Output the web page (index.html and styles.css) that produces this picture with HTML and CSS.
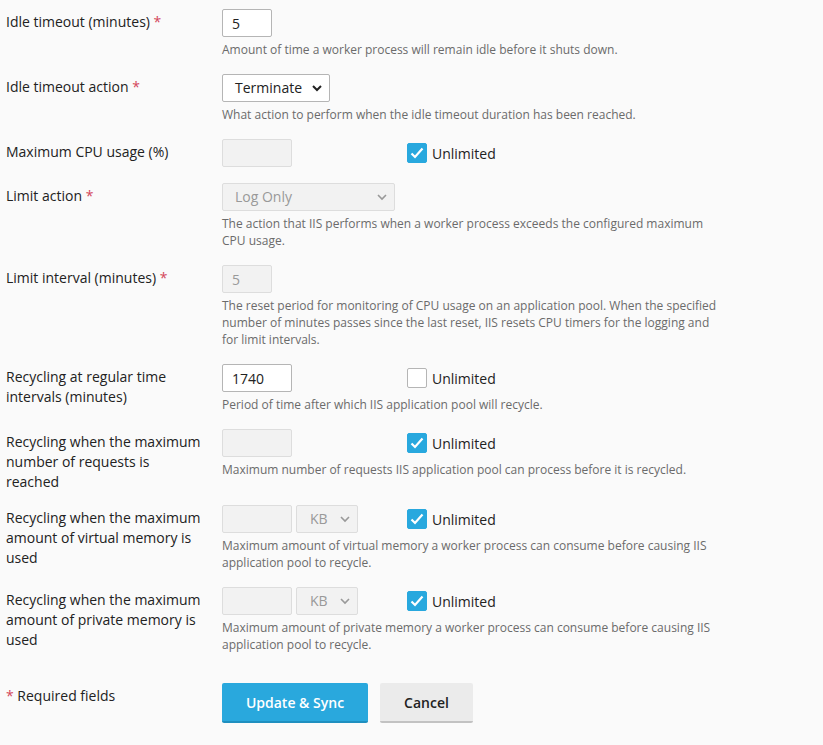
FILE: index.html
```html
<!DOCTYPE html>
<html>
<head>
    <link rel="stylesheet" href="styles.css">
</head>
<body>
    <form class="settings">
        <div class="row">
            <div class="label">Idle timeout (minutes) <span class="req">*</span></div>
            <div class="field">
                <div class="controls"><input class="text short" type="text" value="5"></div>
                <div class="hint">Amount of time a worker process will remain idle before it shuts down.</div>
            </div>
        </div>
        <div class="row">
            <div class="label">Idle timeout action <span class="req">*</span></div>
            <div class="field">
                <div class="controls">
                    <span class="select action">Terminate
                        <svg class="chev" width="10" height="8" viewBox="0 0 10 8"><path d="M1 2l4 4 4-4" fill="none" stroke="#222" stroke-width="2"/></svg>
                    </span>
                </div>
                <div class="hint">What action to perform when the idle timeout duration has been reached.</div>
            </div>
        </div>
        <div class="row">
            <div class="label">Maximum CPU usage (%)</div>
            <div class="field">
                <div class="controls">
                    <div class="group"><input class="text mid" type="text" disabled></div>
                    <label class="check"><span class="box on"><svg width="14" height="12" viewBox="0 0 14 12"><path d="M1.5 6.5l3.5 3.5 7.5-8.5" fill="none" stroke="#fff" stroke-width="2.2"/></svg></span>Unlimited</label>
                </div>
            </div>
        </div>
        <div class="row">
            <div class="label">Limit action <span class="req">*</span></div>
            <div class="field">
                <div class="controls">
                    <span class="select wide off">Log Only
                        <svg class="chev" width="10" height="8" viewBox="0 0 10 8"><path d="M1 2l4 4 4-4" fill="none" stroke="#999" stroke-width="1.6"/></svg>
                    </span>
                </div>
                <div class="hint">The action that IIS performs when a worker process exceeds the configured maximum CPU usage.</div>
            </div>
        </div>
        <div class="row">
            <div class="label">Limit interval (minutes) <span class="req">*</span></div>
            <div class="field">
                <div class="controls"><input class="text short" type="text" value="5" disabled></div>
                <div class="hint">The reset period for monitoring of CPU usage on an application pool. When the specified number of minutes passes since the last reset, IIS resets CPU timers for the logging and for limit intervals.</div>
            </div>
        </div>
        <div class="row">
            <div class="label">Recycling at regular time intervals (minutes)</div>
            <div class="field">
                <div class="controls">
                    <div class="group"><input class="text mid" type="text" value="1740"></div>
                    <label class="check"><span class="box"></span>Unlimited</label>
                </div>
                <div class="hint">Period of time after which IIS application pool will recycle.</div>
            </div>
        </div>
        <div class="row">
            <div class="label">Recycling when the maximum number of requests is reached</div>
            <div class="field">
                <div class="controls">
                    <div class="group"><input class="text mid" type="text" disabled></div>
                    <label class="check"><span class="box on"><svg width="14" height="12" viewBox="0 0 14 12"><path d="M1.5 6.5l3.5 3.5 7.5-8.5" fill="none" stroke="#fff" stroke-width="2.2"/></svg></span>Unlimited</label>
                </div>
                <div class="hint">Maximum number of requests IIS application pool can process before it is recycled.</div>
            </div>
        </div>
        <div class="row">
            <div class="label">Recycling when the maximum amount of virtual memory is used</div>
            <div class="field">
                <div class="controls">
                    <div class="group">
                        <input class="text mid" type="text" disabled>
                        <span class="select unit off">KB
                            <svg class="chev" width="10" height="8" viewBox="0 0 10 8"><path d="M1 2l4 4 4-4" fill="none" stroke="#999" stroke-width="1.6"/></svg>
                        </span>
                    </div>
                    <label class="check"><span class="box on"><svg width="14" height="12" viewBox="0 0 14 12"><path d="M1.5 6.5l3.5 3.5 7.5-8.5" fill="none" stroke="#fff" stroke-width="2.2"/></svg></span>Unlimited</label>
                </div>
                <div class="hint">Maximum amount of virtual memory a worker process can consume before causing IIS application pool to recycle.</div>
            </div>
        </div>
        <div class="row">
            <div class="label">Recycling when the maximum amount of private memory is used</div>
            <div class="field">
                <div class="controls">
                    <div class="group">
                        <input class="text mid" type="text" disabled>
                        <span class="select unit off">KB
                            <svg class="chev" width="10" height="8" viewBox="0 0 10 8"><path d="M1 2l4 4 4-4" fill="none" stroke="#999" stroke-width="1.6"/></svg>
                        </span>
                    </div>
                    <label class="check"><span class="box on"><svg width="14" height="12" viewBox="0 0 14 12"><path d="M1.5 6.5l3.5 3.5 7.5-8.5" fill="none" stroke="#fff" stroke-width="2.2"/></svg></span>Unlimited</label>
                </div>
                <div class="hint">Maximum amount of private memory a worker process can consume before causing IIS application pool to recycle.</div>
            </div>
        </div>
        <div class="row buttons">
            <div class="label"><span class="req">*</span> Required fields</div>
            <div class="field actions">
                <button type="button" class="btn primary">Update &amp; Sync</button>
                <button type="button" class="btn cancel">Cancel</button>
            </div>
        </div>
    </form>
</body>
</html>
```

FILE: styles.css
```css
body {
    background-color: #fafafa;
    font-family: "Open Sans", Arial, sans-serif;
    font-size: 14px;
    color: #222;
    margin: 0;
    padding: 9px 6px;
}
.row {
    display: flex;
    margin-bottom: 13px;
}
.label {
    width: 198px;
    flex: none;
    margin-right: 18px;
    padding-top: 3px;
    line-height: 20px;
}
.req {
    color: #d3465a;
}
.field {
    padding-bottom: 3px;
}
.controls {
    display: flex;
    align-items: center;
    height: 28px;
}
.group {
    display: flex;
    width: 185px; /* keeps the checkbox column lined up */
}
.text {
    box-sizing: border-box;
    height: 28px;
    padding: 0 9px;
    font-family: inherit;
    font-size: 14px;
    color: #222;
    background: #fff;
    border: 1px solid #b5b5b5;
    border-radius: 2px;
    outline: none;
}
.text:disabled {
    background: #f2f2f2;
    border-color: #ddd;
    color: #999;
}
.short { width: 50px; }
.mid { width: 70px; }
.select {
    position: relative;
    box-sizing: border-box;
    display: inline-block;
    height: 28px;
    line-height: 26px;
    padding-left: 12px;
    background: #fff;
    border: 1px solid #b5b5b5;
    border-radius: 2px;
}
.select .chev {
    position: absolute;
    right: 7px;
    top: 9px;
}
.select.off {
    background: #f2f2f2;
    border-color: #ddd;
    color: #999;
}
.action { width: 108px; }
.wide { width: 173px; }
.unit {
    width: 62px;
    margin-left: 4px;
    padding-left: 13px;
}
.check {
    display: flex;
    align-items: center;
}
.box {
    box-sizing: border-box;
    width: 20px;
    height: 20px;
    margin-right: 5px;
    border: 1px solid #b5b5b5;
    border-radius: 2px;
    background: #fff;
    display: flex;
    align-items: center;
    justify-content: center;
}
.box.on {
    background: #28a8de;
    border-color: #28a8de;
}
.hint {
    width: 500px;
    margin-top: 4px;
    font-size: 12px;
    line-height: 17px;
    color: #6b6b6b;
}
.buttons {
    margin-top: 27px;
}
.actions {
    display: flex;
    gap: 12px;
}
.btn {
    height: 40px;
    padding: 0 18px;
    white-space: nowrap;
    font-family: inherit;
    font-size: 14px;
    font-weight: 600;
    color: #222;
    background: #ebebeb;
    border: none;
    border-bottom: 2px solid #c2c2c2;
    border-radius: 2px;
}
.btn.primary {
    width: 146px;
    color: #fff;
    background: #29a8dd;
    border-bottom-color: #1f8fbf;
}
.btn.cancel {
    width: 93px;
}
```
